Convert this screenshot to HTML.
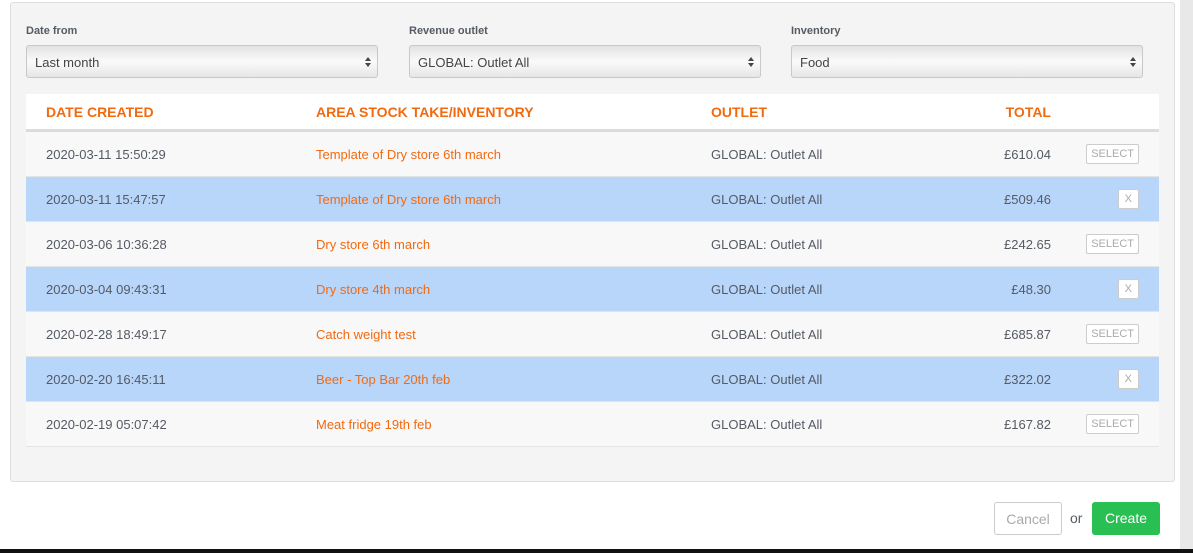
<!DOCTYPE html>
<html><head><style>
body{margin:0;width:1193px;height:553px;background:#fff;font-family:"Liberation Sans",sans-serif;position:relative;overflow:hidden;color:#555b63}
.panel{position:absolute;left:10px;top:2px;width:1163px;height:478px;background:#f4f4f4;border:1px solid #dedede;border-radius:3px}
.lbl{position:absolute;top:25px;font-size:11px;font-weight:bold;color:#555b63}
.sel{position:absolute;top:45px;height:33px;border:1px solid #c8c8c8;border-radius:3px;background:linear-gradient(#e2e2e2,#fafafa 50%,#e6e6e6);font-size:13px;line-height:33px;padding-left:8px;box-sizing:border-box;color:#444}
.sel:after{content:"";position:absolute;right:6px;top:11px;border:3px solid transparent;border-bottom:4px solid #444;border-top:0}
.sel:before{content:"";position:absolute;right:6px;top:17px;border:3px solid transparent;border-top:4px solid #444;border-bottom:0}
table{position:absolute;left:26px;top:94px;width:1133px;border-collapse:collapse;font-size:13px;table-layout:fixed}
th{height:35px;background:#fff;color:#f26a10;text-align:left;font-size:14px;border-bottom:3px solid #dcdcdc;padding:0}
td{height:44px;padding:0;border-bottom:1px solid #e4e4e4;background:#f8f8f8}
tr.b td{background:#b8d5fa}
.o{color:#f26a10}
.r{text-align:right}
.btn{display:inline-block;border:1px solid #ccc;border-radius:2px;background:#fff;font-size:11px;color:#aaa;padding:3px 4px}
.bot{position:absolute;top:502px;height:33px;border-radius:3px;font-size:14px;line-height:33px;text-align:center;box-sizing:border-box}
</style></head><body>
<div class="panel"></div>
<div class="lbl" style="left:26px">Date from</div>
<div class="lbl" style="left:409px">Revenue outlet</div>
<div class="lbl" style="left:791px">Inventory</div>
<div class="sel" style="left:26px;width:352px">Last month</div>
<div class="sel" style="left:409px;width:352px">GLOBAL: Outlet All</div>
<div class="sel" style="left:791px;width:352px">Food</div>
<table>
<colgroup><col style="width:290px"><col style="width:395px"><col style="width:230px"><col style="width:110px"><col style="width:108px"></colgroup>
<tr><th style="padding-left:20px">DATE CREATED</th><th>AREA STOCK TAKE/INVENTORY</th><th>OUTLET</th><th class="r">TOTAL</th><th></th></tr>
<tr><td style="padding-left:20px">2020-03-11 15:50:29</td><td class="o">Template of Dry store 6th march</td><td>GLOBAL: Outlet All</td><td class="r">£610.04</td><td class="r" style="padding-right:20px"><span class="btn">SELECT</span></td></tr>
<tr class="b"><td style="padding-left:20px">2020-03-11 15:47:57</td><td class="o">Template of Dry store 6th march</td><td>GLOBAL: Outlet All</td><td class="r">£509.46</td><td class="r" style="padding-right:20px"><span class="btn" style="padding:3px 6px">X</span></td></tr>
<tr><td style="padding-left:20px">2020-03-06 10:36:28</td><td class="o">Dry store 6th march</td><td>GLOBAL: Outlet All</td><td class="r">£242.65</td><td class="r" style="padding-right:20px"><span class="btn">SELECT</span></td></tr>
<tr class="b"><td style="padding-left:20px">2020-03-04 09:43:31</td><td class="o">Dry store 4th march</td><td>GLOBAL: Outlet All</td><td class="r">£48.30</td><td class="r" style="padding-right:20px"><span class="btn" style="padding:3px 6px">X</span></td></tr>
<tr><td style="padding-left:20px">2020-02-28 18:49:17</td><td class="o">Catch weight test</td><td>GLOBAL: Outlet All</td><td class="r">£685.87</td><td class="r" style="padding-right:20px"><span class="btn">SELECT</span></td></tr>
<tr class="b"><td style="padding-left:20px">2020-02-20 16:45:11</td><td class="o">Beer - Top Bar 20th feb</td><td>GLOBAL: Outlet All</td><td class="r">£322.02</td><td class="r" style="padding-right:20px"><span class="btn" style="padding:3px 6px">X</span></td></tr>
<tr><td style="padding-left:20px">2020-02-19 05:07:42</td><td class="o">Meat fridge 19th feb</td><td>GLOBAL: Outlet All</td><td class="r">£167.82</td><td class="r" style="padding-right:20px"><span class="btn">SELECT</span></td></tr>
</table>
<div class="bot" style="left:994px;width:68px;border:1px solid #ccc;color:#aaa;background:#fff">Cancel</div>
<div style="position:absolute;left:1070px;top:510px;font-size:14px">or</div>
<div class="bot" style="left:1092px;width:68px;background:#28bf53;color:#fff">Create</div>
<div style="position:absolute;left:1180px;top:0;width:13px;height:553px;background:#e8e8e8"></div>
<div style="position:absolute;left:0;top:549px;width:1193px;height:4px;background:#111"></div>
</body></html>
